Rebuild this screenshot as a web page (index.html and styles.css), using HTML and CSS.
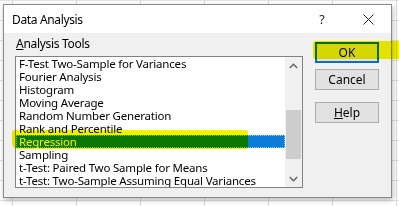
FILE: index.html
```html
<!DOCTYPE html>
<html>
<head>
<meta charset="utf-8">
<link rel="stylesheet" href="styles.css">
</head>
<body>
<div class="sheet"></div>
<div class="dialog">
  <div class="titlebar">
    <span class="title">Data Analysis</span>
    <span class="tb-btn">?</span>
    <span class="tb-btn close">
      <svg width="11" height="11" viewBox="0 0 11 11"><path d="M0.5 0.5 L10.5 10.5 M10.5 0.5 L0.5 10.5" stroke="#222" stroke-width="1" fill="none"/></svg>
    </span>
  </div>
  <div class="body">
    <div class="left">
      <div class="label"><u>A</u>nalysis Tools</div>
      <div class="listbox">
        <div class="items">
          <div class="item">F-Test Two-Sample for Variances</div>
          <div class="item">Fourier Analysis</div>
          <div class="item">Histogram</div>
          <div class="item">Moving Average</div>
          <div class="item">Random Number Generation</div>
          <div class="item">Rank and Percentile</div>
          <div class="item selected">Regression</div>
          <div class="item">Sampling</div>
          <div class="item">t-Test: Paired Two Sample for Means</div>
          <div class="item">t-Test: Two-Sample Assuming Equal Variances</div>
        </div>
        <div class="scrollbar">
          <div class="arrow">
            <svg width="9" height="6" viewBox="0 0 9 6"><path d="M0.8 5 L4.5 1.2 L8.2 5" stroke="#606060" stroke-width="1.3" fill="none"/></svg>
          </div>
          <div class="track"><div class="thumb"></div></div>
          <div class="arrow">
            <svg width="9" height="6" viewBox="0 0 9 6"><path d="M0.8 1 L4.5 4.8 L8.2 1" stroke="#606060" stroke-width="1.3" fill="none"/></svg>
          </div>
        </div>
      </div>
    </div>
    <div class="buttons">
      <div class="btn default">OK</div>
      <div class="btn">Cancel</div>
      <div class="btn help"><u>H</u>elp</div>
    </div>
  </div>
</div>
<div class="marker marker-list"></div>
<div class="marker marker-ok"></div>
</body>
</html>
```

FILE: styles.css
```css
html, body {
  margin: 0;
  padding: 0;
}
body {
  width: 399px;
  height: 206px;
  overflow: hidden;
  position: relative;
  font-family: "Noto Sans", "Open Sans", sans-serif;
  font-size: 12px;
  color: #000;
  background-color: #fff;
  background-image:
    linear-gradient(to right, #d9d9d9 1px, transparent 1px),
    linear-gradient(to bottom, #e2e2e2 1px, transparent 1px);
  background-size: 64px 20px, 64px 20px;
  background-position: 12px 0, 0 0;
}
.dialog {
  position: absolute;
  left: 3px;
  top: 4px;
  width: 387px;
  height: 192px;
  border: 1px solid #8a8a8a;
  background: #f0f0f0;
  box-shadow: 1px 2px 5px rgba(0,0,0,0.28);
  display: flex;
  flex-direction: column;
}
.titlebar {
  height: 28px;
  background: #fff;
  display: flex;
  align-items: center;
  padding-left: 8px;
}
.title {
  flex: 1;
  font-size: 12px;
  letter-spacing: -0.35px;
}
.tb-btn {
  width: 46px;
  height: 28px;
  display: flex;
  align-items: center;
  justify-content: center;
  font-size: 12.5px;
  color: #222;
}
.body {
  flex: 1;
  display: flex;
  padding: 4px 0 0 11px;
}
.left {
  display: flex;
  flex-direction: column;
}
.label {
  height: 14px;
  line-height: 14px;
  margin-bottom: 5px;
  padding-left: 1px;
  font-size: 12px;
  letter-spacing: -0.3px;
}
.listbox {
  width: 286px;
  height: 130px;
  border: 1px solid #828282;
  background: #fff;
  display: flex;
  overflow: hidden;
}
.items {
  flex: 1;
  display: flex;
  flex-direction: column;
}
.item {
  height: 13px;
  line-height: 13px;
  padding-left: 3px;
  font-size: 11.5px;
  letter-spacing: -0.2px;
  white-space: nowrap;
}
.item.selected {
  background: #0a7dd8;
  color: #fff;
  outline: 1px dotted #9ec7ef;
  outline-offset: -1px;
}
.scrollbar {
  width: 17px;
  background: #f0f0f0;
  display: flex;
  flex-direction: column;
}
.arrow {
  height: 17px;
  display: flex;
  align-items: center;
  justify-content: center;
}
.track {
  flex: 1;
  padding-top: 36px;
}
.thumb {
  margin: 0 1px;
  height: 49px;
  background: #cdcdcd;
}
.buttons {
  display: flex;
  flex-direction: column;
  margin-left: 12px;
  padding-top: 5px;
}
.btn {
  width: 62px;
  height: 19px;
  border: 1px solid #adadad;
  background: #e1e1e1;
  display: flex;
  align-items: center;
  justify-content: center;
  font-size: 12px;
  margin-bottom: 6px;
}
.btn.default {
  width: 60px;
  height: 17px;
  border: 2px solid #0a6fc2;
}
.btn.help {
  margin-top: 6px;
}
.marker {
  position: absolute;
  background: #f2f200;
  mix-blend-mode: multiply;
}
.marker-list {
  left: 12px;
  top: 130px;
  width: 236px;
  height: 19px;
  border-radius: 3px 2px 2px 6px;
}
.marker-ok {
  left: 313px;
  top: 41px;
  width: 90px;
  height: 18px;
  border-radius: 3px 0 0 3px;
}
```
